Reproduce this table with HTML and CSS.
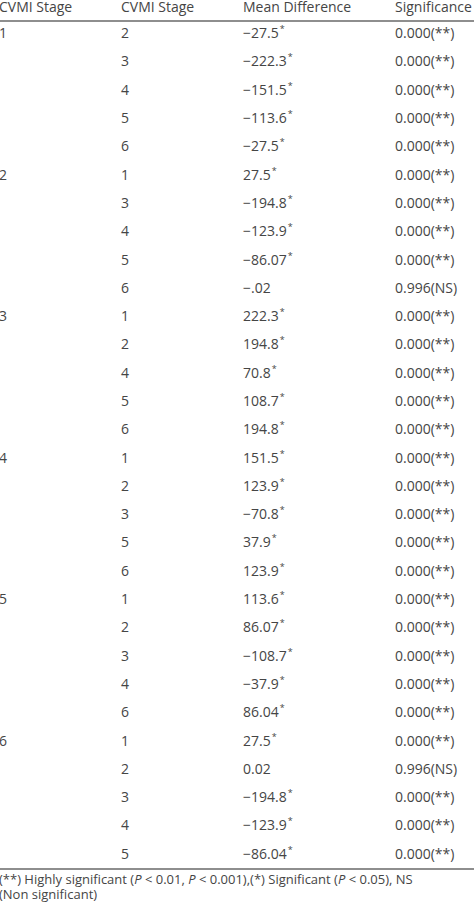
FILE: index.html
```html
<!DOCTYPE html>
<html>
<head>
<meta charset="utf-8">
<link rel="stylesheet" href="styles.css">
</head>
<body>
<div class="page">
<table class="tbl">
<colgroup><col class="c1"><col class="c2"><col class="c3"><col class="c4"></colgroup>
<thead>
<tr><th>CVMI Stage</th><th>CVMI Stage</th><th>Mean Difference</th><th>Significance</th></tr>
</thead>
<tbody>
<tr><td>1</td><td>2</td><td>&minus;27.5<sup>*</sup></td><td>0.000(**)</td></tr>
<tr><td></td><td>3</td><td>&minus;222.3<sup>*</sup></td><td>0.000(**)</td></tr>
<tr><td></td><td>4</td><td>&minus;151.5<sup>*</sup></td><td>0.000(**)</td></tr>
<tr><td></td><td>5</td><td>&minus;113.6<sup>*</sup></td><td>0.000(**)</td></tr>
<tr><td></td><td>6</td><td>&minus;27.5<sup>*</sup></td><td>0.000(**)</td></tr>
<tr><td>2</td><td>1</td><td>27.5<sup>*</sup></td><td>0.000(**)</td></tr>
<tr><td></td><td>3</td><td>&minus;194.8<sup>*</sup></td><td>0.000(**)</td></tr>
<tr><td></td><td>4</td><td>&minus;123.9<sup>*</sup></td><td>0.000(**)</td></tr>
<tr><td></td><td>5</td><td>&minus;86.07<sup>*</sup></td><td>0.000(**)</td></tr>
<tr><td></td><td>6</td><td>&minus;.02</td><td>0.996(NS)</td></tr>
<tr><td>3</td><td>1</td><td>222.3<sup>*</sup></td><td>0.000(**)</td></tr>
<tr><td></td><td>2</td><td>194.8<sup>*</sup></td><td>0.000(**)</td></tr>
<tr><td></td><td>4</td><td>70.8<sup>*</sup></td><td>0.000(**)</td></tr>
<tr><td></td><td>5</td><td>108.7<sup>*</sup></td><td>0.000(**)</td></tr>
<tr><td></td><td>6</td><td>194.8<sup>*</sup></td><td>0.000(**)</td></tr>
<tr><td>4</td><td>1</td><td>151.5<sup>*</sup></td><td>0.000(**)</td></tr>
<tr><td></td><td>2</td><td>123.9<sup>*</sup></td><td>0.000(**)</td></tr>
<tr><td></td><td>3</td><td>&minus;70.8<sup>*</sup></td><td>0.000(**)</td></tr>
<tr><td></td><td>5</td><td>37.9<sup>*</sup></td><td>0.000(**)</td></tr>
<tr><td></td><td>6</td><td>123.9<sup>*</sup></td><td>0.000(**)</td></tr>
<tr><td>5</td><td>1</td><td>113.6<sup>*</sup></td><td>0.000(**)</td></tr>
<tr><td></td><td>2</td><td>86.07<sup>*</sup></td><td>0.000(**)</td></tr>
<tr><td></td><td>3</td><td>&minus;108.7<sup>*</sup></td><td>0.000(**)</td></tr>
<tr><td></td><td>4</td><td>&minus;37.9<sup>*</sup></td><td>0.000(**)</td></tr>
<tr><td></td><td>6</td><td>86.04<sup>*</sup></td><td>0.000(**)</td></tr>
<tr><td>6</td><td>1</td><td>27.5<sup>*</sup></td><td>0.000(**)</td></tr>
<tr><td></td><td>2</td><td>0.02</td><td>0.996(NS)</td></tr>
<tr><td></td><td>3</td><td>&minus;194.8<sup>*</sup></td><td>0.000(**)</td></tr>
<tr><td></td><td>4</td><td>&minus;123.9<sup>*</sup></td><td>0.000(**)</td></tr>
<tr><td></td><td>5</td><td>&minus;86.04<sup>*</sup></td><td>0.000(**)</td></tr>
</tbody>
</table>
<p class="note">(**) Highly significant (<i>P</i> &lt; 0.01, <i>P</i> &lt; 0.001),(*) Significant (<i>P</i> &lt; 0.05), NS<br>(Non significant)</p>
</div>
</body>
</html>
```
FILE: styles.css
```css
html, body {
  margin: 0;
  padding: 0;
  background: #ffffff;
}
.page {
  width: 474px;
  overflow: hidden;
  font-family: "Open Sans", "Noto Sans", sans-serif;
  color: #454545;
  font-size: 14px;
}
.tbl {
  border-collapse: separate;
  border-spacing: 0;
  table-layout: fixed;
  width: 480px;
  margin-left: -1px;
}
.c1 { width: 122px; }
.c2 { width: 122px; }
.c3 { width: 152px; }
.c4 { width: 84px; }
.tbl th {
  font-weight: 400;
  text-align: left;
  padding: 0 0 6px 0;
  line-height: 14px;
  vertical-align: top;
  white-space: nowrap;
  border-bottom: 2px solid #8e8e8e;
}
.tbl td {
  padding: 4px 0 4.3px 0;
  line-height: 20px;
  vertical-align: top;
  white-space: nowrap;
}
.tbl tbody tr:first-child td { padding-top: 1.15px; }
.tbl tbody tr:last-child td { border-bottom: 2px solid #8e8e8e; }
.tbl sup {
  font-size: 9px;
  vertical-align: 6px;
  line-height: 0;
  margin-left: 1px;
}
.note {
  margin: 1.6px 0 0 -1px;
  font-size: 13px;
  line-height: 15px;
  white-space: nowrap;
}
```
